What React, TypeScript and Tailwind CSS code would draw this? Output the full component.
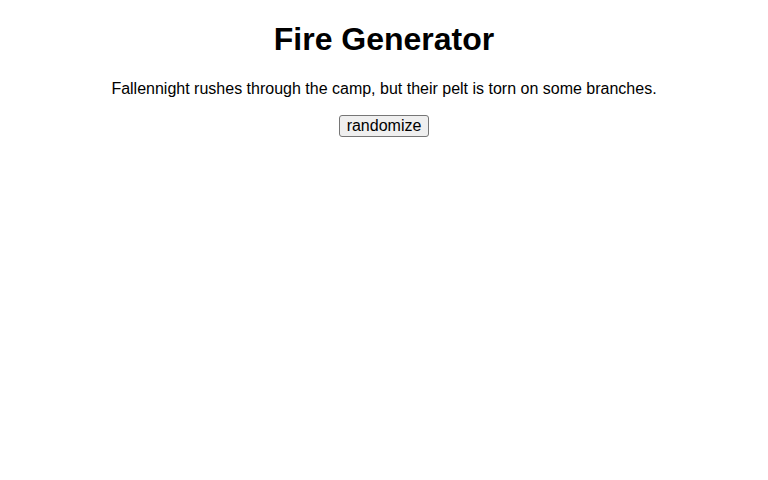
export default function App() {
  return (
    <div className="min-h-[480px] bg-white px-2 text-center text-black font-['Liberation_Sans',Arial,sans-serif]">
      <h1 className="pt-[21.44px] pb-[21.44px] text-[32px] leading-[normal] font-bold">
        Fire Generator
      </h1>
      <p className="mb-4 text-base leading-[normal]">
        Fallennight rushes through the camp, but their pelt is torn on some branches.
      </p>
      <button
        type="button"
        className="rounded-[3px] border border-[#767676] bg-[#efefef] px-[7px] py-[1px] text-base leading-[normal] hover:bg-[#e5e5e5]"
      >
        randomize
      </button>
    </div>
  );
}
